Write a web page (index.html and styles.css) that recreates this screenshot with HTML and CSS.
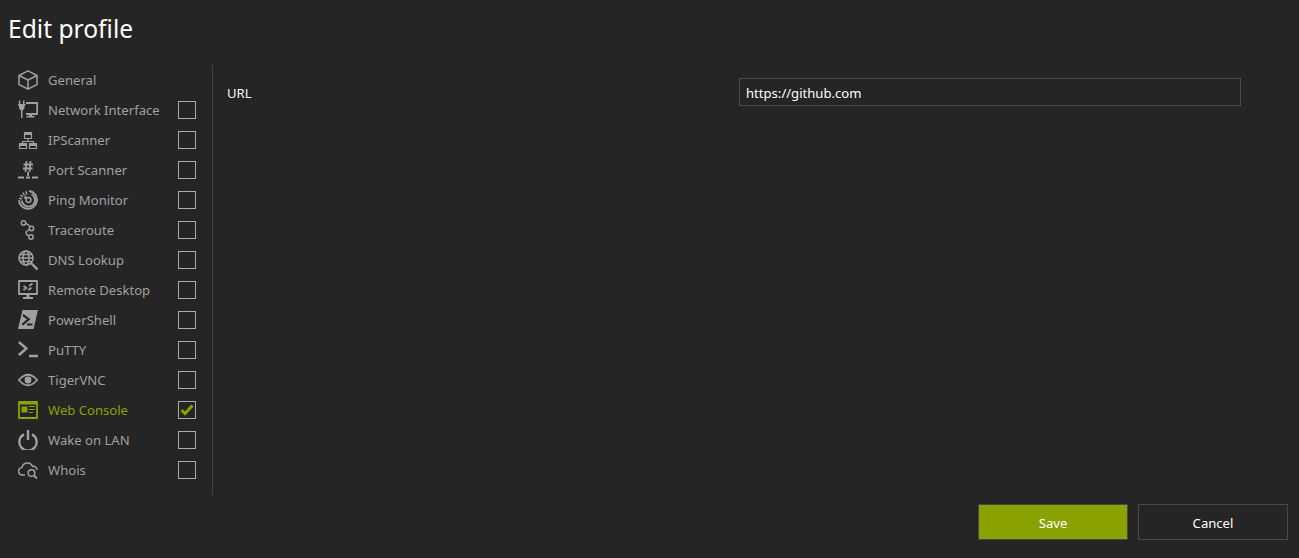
FILE: index.html
```html
<!DOCTYPE html>
<html lang="en">
<head>
<meta charset="utf-8">
<title>Edit profile</title>
<link rel="stylesheet" href="styles.css">
</head>
<body>
<div class="dialog">
  <h1 class="title">Edit profile</h1>
  <div class="content">
    <nav class="nav">
      <div class="row">
        <svg class="icon" viewBox="0 0 20 20"><path d="M10 .8 19 5.500V14.500L10 19.200 1 14.500V5.500ZM1 5.500 10 10 19 5.500M10 10V19.200"/></svg>
        <span class="label">General</span>
      </div>
      <div class="row">
        <svg class="icon" viewBox="0 0 20 20"><path class="thick-ish" d="M8 3H19.200V14H8"/><path class="solid" d="M11 14h3v2.500h-3zM8.500 16h8V17.500h-8zM.8 .5H2.300V4H.8zM5 .5H6.500V4H5zM0 4h7.500v1.500H6.500V8.500L4.500 10.500V18H3V10.500L1 8.500V5.500H0z"/></svg>
        <span class="label">Network Interface</span><span class="box"></span>
      </div>
      <div class="row">
        <svg class="icon" viewBox="0 0 20 20"><path class="thin" d="M6.500 2.500H13.500V8.500H6.500ZM10 8.500V11.500M4.500 13.500V11.500H15.500V13.500M1.500 13.500H8.500V18.500H1.500ZM11.500 13.500H18.500V18.500H11.500Z"/><path class="solid" d="M7 2.500H13V5H7zM2 13.500H8V16H2zM12 13.500H18V16H12z"/></svg>
        <span class="label">IPScanner</span><span class="box"></span>
      </div>
      <div class="row">
        <svg class="icon" viewBox="0 0 20 20"><path class="thick-ish" d="M8.500 1 7.500 12M12.500 1 11.500 12M5.500 4.500H15M5 8.500H14.500M10 12V16"/><path class="thick-ish" d="M0 17.500H6M8 17.500H12M14 17.500H20"/></svg>
        <span class="label">Port Scanner</span><span class="box"></span>
      </div>
      <div class="row">
        <svg class="icon" viewBox="0 0 20 20"><path class="thick-ish" d="M11 1A9 9 0 1 1 1 10M13.500 4.200A6.600 6.600 0 1 1 3.800 10.500"/><circle cx="10.500" cy="10" r="2.400"/><path d="M8 1.200 8.800 4.500M4.800 2.500 6.500 5.500M2.300 5 5 7M1 8.200 4 9M8.300 5.800A5 5 0 0 0 6.500 9"/></svg>
        <span class="label">Ping Monitor</span><span class="box"></span>
      </div>
      <div class="row">
        <svg class="icon" viewBox="0 0 20 20"><circle cx="5.500" cy="3" r="2.200"/><circle cx="13.500" cy="8.500" r="2.200"/><circle cx="13" cy="17" r="2.200"/><path d="M7.700 3.400Q10.500 4.500 12 6.700M11.500 9.500 8.500 11.500Q7 14 11 16"/></svg>
        <span class="label">Traceroute</span><span class="box"></span>
      </div>
      <div class="row">
        <svg class="icon" viewBox="0 0 20 20"><circle cx="8" cy="8" r="7"/><ellipse cx="8" cy="8" rx="3" ry="7"/><path d="M1 8H15M2 4.500H14M2 11.500H14"/><path class="thick" d="M13 13 19.500 19.500"/></svg>
        <span class="label">DNS Lookup</span><span class="box"></span>
      </div>
      <div class="row">
        <svg class="icon" viewBox="0 0 20 20"><path class="thick-ish" d="M1 1H19V14H1ZM5.500 6 8.500 8 5.500 10M14.500 3.500 11.200 6M10.200 10 13.500 7.700"/><path class="solid" d="M8.500 14h3v3h-3zM5 17h10v2H5z"/></svg>
        <span class="label">Remote Desktop</span><span class="box"></span>
      </div>
      <div class="row">
        <svg class="icon" viewBox="0 0 20 20"><path class="solid" fill-rule="evenodd" d="M4.500 0H20L15.500 19H0ZM5.500 4 4.500 6 9 9.300 3.500 14 5 15.500 12.500 9.300ZM9 13.500v2h5.500v-2z"/></svg>
        <span class="label">PowerShell</span><span class="box"></span>
      </div>
      <div class="row">
        <svg class="icon" viewBox="0 0 20 20"><path class="thick" d="M.8 2 8.500 8.500 .8 15M11 16H20"/></svg>
        <span class="label">PuTTY</span><span class="box"></span>
      </div>
      <div class="row">
        <svg class="icon" viewBox="0 0 20 20"><path class="thick-ish" d="M.8 10Q10 -.5 19.200 10 10 20.500.8 10Z"/><circle class="solid" cx="10" cy="10" r="3.400"/></svg>
        <span class="label">TigerVNC</span><span class="box"></span>
      </div>
      <div class="row active">
        <svg class="icon" viewBox="0 0 20 20"><path class="thick-ish" d="M1 2H19V18H1Z"/><path class="solid" d="M3.500 6.500H9.500V12.500H3.500z"/><path class="thin" d="M11 6.500H17M11 9.500H17M11 12.500H15"/><path class="solid" d="M1 1.500H19V4.500H1z"/></svg>
        <span class="label">Web Console</span><span class="box"><svg class="check" viewBox="0 0 14 12"><path d="M1.500 6 5 9.500 12.500 1.500"/></svg></span>
      </div>
      <div class="row">
        <svg class="icon" viewBox="0 0 20 20"><path class="thick" d="M6 4.400A8.600 8.600 0 1 0 14 4.400M10 0V10"/></svg>
        <span class="label">Wake on LAN</span><span class="box"></span>
      </div>
      <div class="row">
        <svg class="icon" viewBox="0 0 20 20"><path d="M7 15H4.500A3.700 3.700 0 0 1 4 7.600 5.500 5.500 0 0 1 14.500 6.500 3.500 3.500 0 0 1 19 10"/><circle cx="13.500" cy="13" r="3.300"/><path class="thick-ish" d="M16 15.500 19 18.500"/></svg>
        <span class="label">Whois</span><span class="box"></span>
      </div>
    </nav>
    <main class="main">
      <div class="field">
        <label class="field-label" for="url">URL</label>
        <input class="input" id="url" type="text" value="https://github.com">
      </div>
    </main>
  </div>
  <div class="actions">
    <button class="btn primary" type="button">Save</button>
    <button class="btn" type="button">Cancel</button>
  </div>
</div>
</body>
</html>
```
FILE: styles.css
```css
* { box-sizing: border-box; }
html, body { margin: 0; height: 100%; }
body {
  background: #252525;
  color: #fff;
  font-family: "Noto Sans", "Open Sans", sans-serif;
  font-size: 13.1px;
  overflow: hidden;
}
.dialog { height: 558px; display: flex; flex-direction: column; }
.title {
  margin: 0;
  height: 65px;
  padding: 11px 0 0 8px;
  font-size: 24.6px;
  line-height: 36px;
  font-weight: 400;
}
.content { display: flex; height: 430px; }
.nav { width: 213px; border-right: 1px solid #444; display: flex; flex-direction: column; padding-left: 18px; }
.row { height: 30px; display: flex; align-items: center; color: #a0a0a0; }
.row.active { color: #8aa200; }
.icon { width: 20px; height: 20px; margin-right: 10px; fill: none; stroke: currentColor; stroke-width: 1.500; stroke-linejoin: round; flex: none; }
.icon .solid { fill: currentColor; stroke: none; }
.icon .thick { stroke-width: 2.400; }
.icon .thick-ish { stroke-width: 1.800; }
.icon .thin { stroke-width: 1.200; }
.label { flex: 1; white-space: nowrap; }
.box {
  width: 18px; height: 18px;
  margin-right: 16px;
  border: 1px solid #aaa;
  display: flex; align-items: center; justify-content: center;
}
.check { width: 14px; height: 12px; fill: none; stroke: #8aa200; stroke-width: 3; }
.main { flex: 1; padding: 13px 58px 0 14px; }
.field { display: flex; align-items: center; justify-content: space-between; }
.field-label { color: #f4f4f4; padding-top: 2px; }
.input {
  width: 502px; height: 28px;
  padding: 2px 6px 0;
  background: transparent;
  border: 1px solid #4a4a4a;
  color: #fff;
  font: inherit;
  outline: none;
}
.actions { display: flex; justify-content: flex-end; gap: 10px; padding: 9px 11px 0 0; }
.btn {
  width: 150px; height: 36px;
  padding: 2px 0 0;
  background: transparent;
  border: 1px solid #484848;
  color: #fff;
  font: inherit;
}
.btn.primary { background: #8aa200; }
```
